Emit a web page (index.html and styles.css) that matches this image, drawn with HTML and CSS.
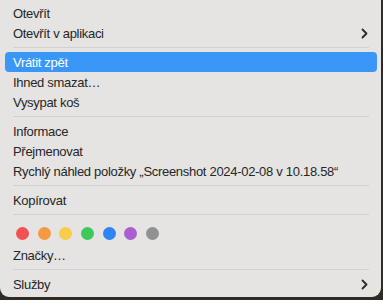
FILE: index.html
```html
<!DOCTYPE html>
<html lang="cs">
<head>
  <meta charset="UTF-8">
  <title>Kontextová nabídka</title>
  <link rel="stylesheet" href="styles.css">
</head>
<body>

  <div class="menu">
    <div class="item">Otevřít</div>
    <div class="item sub">Otevřít v aplikaci
      <svg class="chev" width="7" height="11" viewBox="0 0 7 11"><path d="M1.5 1.5 L5.5 5.5 L1.5 9.5" fill="none" stroke="#2a2a2a" stroke-width="1.8" stroke-linecap="round" stroke-linejoin="round"/></svg>
    </div>
    <div class="sep"></div>
    <div class="item active">Vrátit zpět</div>
    <div class="item">Ihned smazat…</div>
    <div class="item">Vysypat koš</div>
    <div class="sep"></div>
    <div class="item">Informace</div>
    <div class="item">Přejmenovat</div>
    <div class="item">Rychlý náhled položky „Screenshot 2024-02-08 v 10.18.58“</div>
    <div class="sep"></div>
    <div class="item">Kopírovat</div>
    <div class="sep"></div>
    <div class="tags">
      <span class="dot red"></span>
      <span class="dot orange"></span>
      <span class="dot yellow"></span>
      <span class="dot green"></span>
      <span class="dot blue"></span>
      <span class="dot purple"></span>
      <span class="dot grey"></span>
    </div>
    <div class="item">Značky…</div>
    <div class="sep"></div>
    <div class="item sub">Služby
      <svg class="chev" width="7" height="11" viewBox="0 0 7 11"><path d="M1.5 1.5 L5.5 5.5 L1.5 9.5" fill="none" stroke="#2a2a2a" stroke-width="1.8" stroke-linecap="round" stroke-linejoin="round"/></svg>
    </div>
  </div>

</body>
</html>
```

FILE: styles.css
```css
* { box-sizing: border-box; }

body {
  margin: 0;
  width: 383px;
  height: 300px;
  overflow: hidden;
  background: #2e2a24;
  font-family: 'Liberation Sans', Arial, sans-serif;
}

.menu {
  width: 381px;
  height: 297px;
  padding-top: 3px;
  background: #e5e4e2;
  border-radius: 0 0 9px 9px;
  color: #262626;
  font-size: 13px;
  letter-spacing: -0.3px;
}

.item {
  display: flex;
  align-items: center;
  justify-content: space-between;
  height: 20px;
  margin: 0 4px 0 5px;
  padding: 0 9px 0 8px;
  border-radius: 4px;
  white-space: nowrap;
}

.item.active {
  background: #3a97f7;
  color: #fff;
}

.chev {
  display: block;
}

.sep {
  height: 1px;
  margin: 4px 12px 4px 13px;
  background: #d2d1cf;
}

.tags {
  display: flex;
  align-items: center;
  gap: 8.7px;
  height: 26px;
  padding: 3px 0 0 16px;
}

.dot {
  width: 13px;
  height: 13px;
  border-radius: 50%;
}

.red { background: #f25252; }
.orange { background: #f59a42; }
.yellow { background: #f7cd4b; }
.green { background: #3ec95d; }
.blue { background: #2f84f2; }
.purple { background: #a85fd0; }
.grey { background: #919194; }
```
